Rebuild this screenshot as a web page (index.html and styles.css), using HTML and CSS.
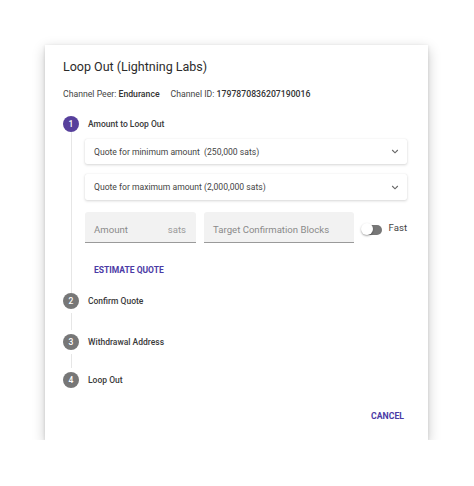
FILE: index.html
```html
<!DOCTYPE html>
<html>
<head>
<meta charset="utf-8">
<link rel="stylesheet" href="styles.css">
</head>
<body>
<div class="card">
  <h1 class="title">Loop Out (Lightning Labs)</h1>
  <div class="meta">
    <span>Channel Peer: <b>Endurance</b></span>
    <span>Channel ID: <b>1797870836207190016</b></span>
  </div>
  <div class="steps">
    <div class="step">
      <div class="step-head"><span class="num active">1</span><span class="label">Amount to Loop Out</span></div>
      <div class="step-body">
        <div class="select">
          <span>Quote for minimum amount&nbsp; (250,000 sats)</span>
          <svg class="chev" width="8" height="5" viewBox="0 0 8 5"><polyline points="1.2,1 4,3.8 6.8,1" fill="none" stroke="#666" stroke-width="1.1"/></svg>
        </div>
        <div class="select second">
          <span>Quote for maximum amount (2,000,000 sats)</span>
          <svg class="chev" width="8" height="5" viewBox="0 0 8 5"><polyline points="1.2,1 4,3.8 6.8,1" fill="none" stroke="#666" stroke-width="1.1"/></svg>
        </div>
        <div class="inputs">
          <div class="field amount"><span>Amount</span><span class="suffix">sats</span></div>
          <div class="field target"><span>Target Confirmation Blocks</span></div>
          <div class="toggle"><span class="track"></span><span class="thumb"></span></div>
          <span class="fast">Fast</span>
        </div>
        <div class="estimate">ESTIMATE QUOTE</div>
      </div>
    </div>
    <div class="step">
      <div class="step-head"><span class="num">2</span><span class="label">Confirm Quote</span></div>
      <div class="step-gap"></div>
    </div>
    <div class="step">
      <div class="step-head"><span class="num">3</span><span class="label">Withdrawal Address</span></div>
      <div class="step-gap short"></div>
    </div>
    <div class="step">
      <div class="step-head"><span class="num">4</span><span class="label">Loop Out</span></div>
    </div>
  </div>
  <div class="actions"><span class="cancel">CANCEL</span></div>
</div>
</body>
</html>
```
FILE: styles.css
```css
* { box-sizing: border-box; }
body {
  margin: 0;
  background: #fff;
  font-family: Roboto, "Liberation Sans", sans-serif;
  color: #333;
}
.card {
  margin: 45px 0 0 45px;
  width: 383px;
  height: 395px;
  background: #fff;
  box-shadow: 0 4px 12px rgba(0,0,0,0.22), 0 1px 3px rgba(0,0,0,0.12);
  padding: 12px 21px 0 18px;
  display: flex;
  flex-direction: column;
}
.title {
  margin: 0;
  font-size: 12.5px;
  line-height: 20px;
  font-weight: 400;
  color: #2b2b2b;
}
.meta {
  margin-top: 10px;
  font-size: 8.7px;
  line-height: 14px;
  display: flex;
  gap: 11px;
  color: #444;
}
.meta b { font-weight: 500; color: #333; }
.steps { margin-top: 15px; }
.step-head {
  display: flex;
  align-items: center;
  height: 16px;
}
.num {
  width: 16px;
  height: 16px;
  border-radius: 50%;
  background: #777;
  color: #fff;
  font-size: 8.5px;
  font-weight: 500;
  display: flex;
  align-items: center;
  justify-content: center;
}
.num.active { background: #57409c; }
.label {
  margin-left: 9px;
  font-size: 8.5px;
  font-weight: 500;
  color: #3a3a3a;
}
.step-body {
  margin-left: 8px;
  border-left: 1px solid #e6e6e6;
  padding: 7px 0 17px 13px;
}
.step-gap {
  margin-left: 8px;
  border-left: 1px solid #e6e6e6;
  height: 17px;
  margin-top: 4px;
  margin-bottom: 4px;
}
.step-gap.short { height: 14px; }
.select {
  height: 25px;
  background: #fff;
  box-shadow: 0 1px 3px rgba(0,0,0,0.16), 0 0 1px rgba(0,0,0,0.1);
  border-radius: 2px;
  display: flex;
  align-items: center;
  justify-content: space-between;
  padding: 0 8px 0 9px;
  font-size: 8.6px;
  color: #444;
}
.select.second { margin-top: 10px; height: 26px; }
.inputs {
  margin-top: 12px;
  display: flex;
  align-items: center;
}
.field {
  height: 31px;
  background: #f2f2f2;
  border-bottom: 1px solid #9a9a9a;
  border-radius: 3px 3px 0 0;
  display: flex;
  align-items: center;
  justify-content: space-between;
  padding: 5px 10px 0 9px;
  font-size: 9.6px;
  color: #8a8a8a;
}
.field.amount { width: 112px; }
.field.target { width: 151px; margin-left: 8px; }
.suffix { color: #9a9a9a; }
.toggle {
  position: relative;
  width: 21px;
  height: 12px;
  margin-left: 7px;
  margin-top: 4px;
}
.track {
  position: absolute;
  left: 3px;
  top: 1px;
  width: 18px;
  height: 10px;
  border-radius: 5px;
  background: #777;
}
.thumb {
  position: absolute;
  left: 0;
  top: -1px;
  width: 12px;
  height: 12px;
  border-radius: 50%;
  background: #fff;
  box-shadow: 0 1px 2px rgba(0,0,0,0.35);
}
.fast {
  margin-left: 7px;
  font-size: 9.6px;
  color: #444;
  margin-top: -1px;
}
.estimate {
  margin-top: 21px;
  margin-left: 9px;
  font-size: 8.5px;
  font-weight: 700;
  color: #4b3aa5;
  line-height: 12px;
}
.actions {
  margin-top: auto;
  margin-bottom: 18px;
  display: flex;
  justify-content: flex-end;
  padding-right: 3px;
}
.cancel {
  font-size: 8.7px;
  font-weight: 700;
  color: #4b3aa5;
  line-height: 12px;
}
```
